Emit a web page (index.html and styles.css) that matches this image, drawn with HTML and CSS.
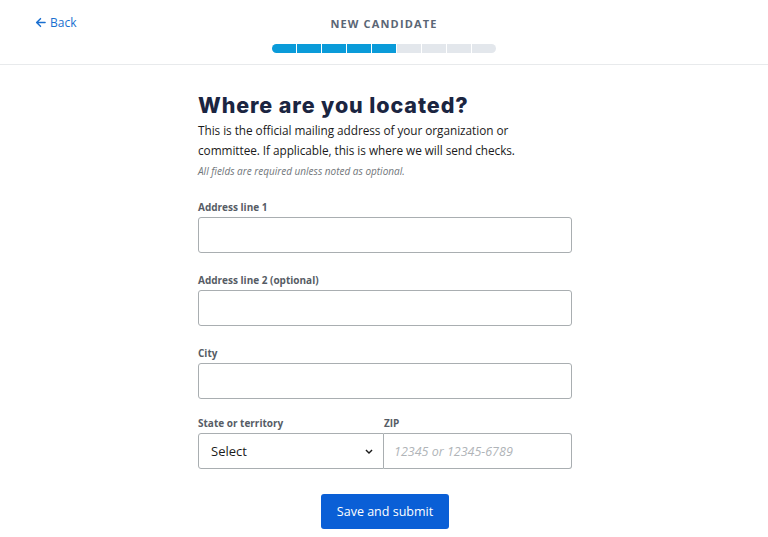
FILE: index.html
```html
<!DOCTYPE html>
<html lang="en">
<head>
<meta charset="utf-8">
<title>New candidate</title>
<link rel="stylesheet" href="styles.css">
</head>
<body>
<header class="topbar">
  <a class="back" href="#"><svg class="back-icon" viewBox="0 0 12 12" width="11" height="11"><path d="M11 6H2M6 1.8L1.8 6 6 10.2" fill="none" stroke="currentColor" stroke-width="1.6" stroke-linecap="round" stroke-linejoin="round"/></svg>Back</a>
  <div class="center">
    <div class="title">NEW CANDIDATE</div>
    <div class="progress">
      <span class="seg on"></span><span class="seg on"></span><span class="seg on"></span><span class="seg on"></span><span class="seg on"></span><span class="seg"></span><span class="seg"></span><span class="seg"></span><span class="seg"></span>
    </div>
  </div>
  <div></div>
</header>
<main class="form">
  <h1 class="heading">Where are you located?</h1>
  <p class="lead">This is the official mailing address of your organization or committee. If applicable, this is where we will send checks.</p>
  <p class="note">All fields are required unless noted as optional.</p>

  <label class="label">Address line 1</label>
  <input class="field" type="text">

  <label class="label">Address line 2 (optional)</label>
  <input class="field" type="text">

  <label class="label">City</label>
  <input class="field" type="text">

  <div class="pair">
    <div class="col col-state">
      <label class="label">State or territory</label>
      <div class="select"><span>Select</span><svg viewBox="0 0 10 6" width="8" height="5"><path d="M1.2 1.2L5 4.8 8.8 1.2" fill="none" stroke="#1b1b1b" stroke-width="1.8"/></svg></div>
    </div>
    <div class="col col-zip">
      <label class="label">ZIP</label>
      <input class="field zip" type="text" placeholder="12345 or 12345-6789">
    </div>
  </div>

  <div class="actions"><button class="submit">Save and submit</button></div>
</main>
</body>
</html>
```
FILE: styles.css
```css
* { box-sizing: border-box; }
body {
  margin: 0;
  background: #fff;
  font-family: "Open Sans", "Noto Sans", sans-serif;
  color: #1b1b1b;
}
.topbar {
  height: 65px;
  border-bottom: 1px solid #e8eaec;
  display: grid;
  grid-template-columns: 1fr auto 1fr;
}
.back {
  justify-self: start;
  margin: 14px 0 0 35px;
  color: #1a6fd0;
  text-decoration: none;
  font-size: 12px;
  display: flex;
  align-items: center;
  gap: 4px;
  height: 16px;
}
.back-icon { display: block; }
.center {
  display: flex;
  flex-direction: column;
  align-items: center;
}
.title {
  margin-top: 17px;
  font-size: 11px;
  font-weight: 700;
  letter-spacing: 1.15px;
  color: #5a6675;
  line-height: 14px;
}
.progress {
  margin-top: 13px;
  display: flex;
  gap: 1.4px;
  width: 224px;
  height: 9px;
  border-radius: 5px;
  overflow: hidden;
}
.seg { flex: 1; background: #e3e7ec; }
.seg.on { background: #0a9bd9; }

.form {
  width: 376px;
  margin: 0 auto;
  padding: 27px 0 0 2px;
  display: flex;
  flex-direction: column;
}
.heading {
  margin: 0;
  font-family: "Inter", "Lato", sans-serif;
  font-weight: 800;
  font-size: 21.5px;
  letter-spacing: 0.9px;
  line-height: 26px;
  color: #1b2541;
}
.lead {
  margin: 3px 0 0;
  font-size: 11.8px;
  letter-spacing: -0.05px;
  line-height: 19.5px;
  color: #1b1b1b;
}
.note {
  margin: 4px 0 2px;
  font-size: 10px;
  font-style: italic;
  color: #71767a;
  line-height: 14px;
}
.label {
  margin-top: 20px;
  font-size: 10px;
  font-weight: 700;
  color: #565c65;
  line-height: 14px;
}
.field {
  margin-top: 3px;
  height: 36px;
  border: 1px solid #a9aeb1;
  border-radius: 3px;
  font-family: inherit;
  font-size: 12.5px;
  padding: 0 11px;
  background: #fff;
}
.pair {
  display: flex;
}
.pair .label { margin-top: 17px; display: block; }
.col { display: flex; flex-direction: column; }
.col-state { width: 186px; }
.col-zip { flex: 1; }
.select {
  margin-top: 3px;
  height: 36px;
  border: 1px solid #a9aeb1;
  border-radius: 3px 0 0 3px;
  display: flex;
  align-items: center;
  justify-content: space-between;
  padding: 0 10px 0 12px;
  font-size: 13px;
  color: #1b1b1b;
}
.select svg { display: block; }
.field.zip {
  border-left: none;
  border-radius: 0 3px 3px 0;
  padding-left: 10px;
}
.field.zip::placeholder { color: #b0b4b8; font-style: italic; }
.actions {
  display: flex;
  justify-content: center;
  margin-top: 25px;
}
.submit {
  width: 128px;
  height: 35px;
  border: none;
  border-radius: 3px;
  background: #0a5fd6;
  color: #fff;
  font-family: inherit;
  font-size: 12.5px;
}
```
